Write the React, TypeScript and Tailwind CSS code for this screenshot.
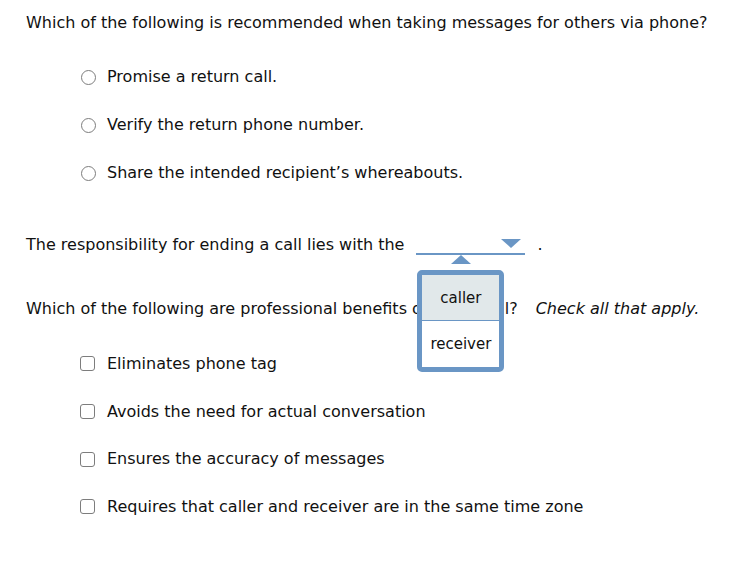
import React from "react";

const RADIO_OPTIONS = [
  "Promise a return call.",
  "Verify the return phone number.",
  "Share the intended recipient\u2019s whereabouts.",
];

const CHECK_OPTIONS = [
  "Eliminates phone tag",
  "Avoids the need for actual conversation",
  "Ensures the accuracy of messages",
  "Requires that caller and receiver are in the same time zone",
];

function Radio() {
  return <span className="w-[15px] h-[15px] rounded-full border border-[#7d7d7d] bg-white shrink-0" />;
}

function Checkbox() {
  return <span className="w-[15px] h-[15px] rounded-[3px] border border-[#7d7d7d] bg-white shrink-0" />;
}

function Dropdown() {
  return (
    <span className="relative inline-block w-[109px] h-[20px] border-b-2 border-[#6a96c5] align-middle">
      {/* arrow */}
      <span className="absolute right-[4px] top-[4px] w-0 h-0 border-x-[10px] border-x-transparent border-t-[9px] border-t-[#6a96c5]" />
      {/* open menu */}
      <div className="absolute left-[1px] top-[20px] z-10 text-[15px]">
        <div className="ml-[34px] w-0 h-0 border-x-[10px] border-x-transparent border-b-[9px] border-b-[#6a96c5]" />
        <div className="mt-[6px] w-[87px] rounded-[5px] border-[5px] border-[#6a96c5] bg-white overflow-hidden">
          <div className="h-[46px] flex items-center justify-center bg-[#e1e8ea] border-b border-[#6a96c5]">caller</div>
          <div className="h-[46px] flex items-center justify-center bg-white">receiver</div>
        </div>
      </div>
    </span>
  );
}

export default function App() {
  return (
    <div
      className="w-[744px] h-[564px] bg-white text-[#111] text-[16px] leading-[18px] px-[26px] pt-[14px]"
      style={{ fontFamily: '"DejaVu Sans", Verdana, sans-serif' }}
    >
      <p>Which of the following is recommended when taking messages for others via phone?</p>

      <ul className="mt-[21px] pl-[55px]">
        {RADIO_OPTIONS.map((o) => (
          <li key={o} className="h-[48px] flex items-center gap-[11px]">
            <Radio />
            <span>{o}</span>
          </li>
        ))}
      </ul>

      <div className="mt-[34px] flex items-end h-[24px]">
        <span className="mb-[1px]">The responsibility for ending a call lies with the</span>
        <span className="ml-[12px]">
          <Dropdown />
        </span>
        <span className="ml-[12px] mb-[1px]">.</span>
      </div>

      <p className="mt-[45px]">
        Which of the following are professional benefits of voicemail?
        <em className="ml-[18px]">Check all that apply.</em>
      </p>

      <ul className="mt-[22px] pl-[54px]">
        {CHECK_OPTIONS.map((o) => (
          <li key={o} className="h-[47.7px] flex items-center gap-[12px]">
            <Checkbox />
            <span>{o}</span>
          </li>
        ))}
      </ul>
    </div>
  );
}
